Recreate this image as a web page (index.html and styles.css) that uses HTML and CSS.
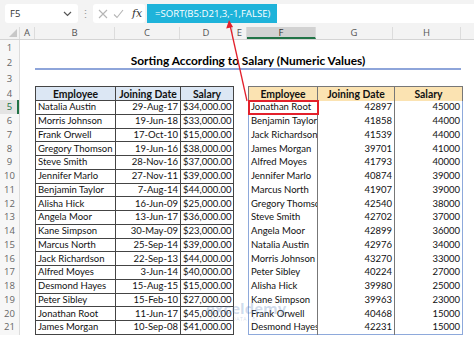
FILE: index.html
```html
<!DOCTYPE html>
<html>
<head>
<meta charset="utf-8">
<link rel="stylesheet" href="styles.css">
</head>
<body>
<div class="app">
  <div class="fbar">
    <div class="namebox"><span>F5</span>
      <svg class="chev" width="9" height="6" viewBox="0 0 9 6"><path d="M1 1 L4.5 4.5 L8 1" fill="none" stroke="#555" stroke-width="1.2"/></svg>
    </div>
    <div class="dots">⋮</div>
    <div class="fbtns">
      <svg width="10" height="10" viewBox="0 0 10 10"><path d="M1 1 L9 9 M9 1 L1 9" stroke="#b5b5b5" stroke-width="1.1"/></svg>
      <svg width="11" height="10" viewBox="0 0 11 10"><path d="M1 5.5 L4 8.5 L10 1" fill="none" stroke="#b5b5b5" stroke-width="1.1"/></svg>
      <span class="fx">fx</span>
    </div>
    <div class="finput"><span class="formula">=SORT(B5:D21,3,-1,FALSE)</span></div>
  </div>

  <div class="colhead">
    <div class="corner"><svg width="8" height="8" viewBox="0 0 8 8"><path d="M8 0 L8 8 L0 8 Z" fill="#c8c8c8"/></svg></div>
    <div class="ch w-a">A</div>
    <div class="ch w-b">B</div>
    <div class="ch w-c">C</div>
    <div class="ch w-d">D</div>
    <div class="ch w-e">E</div>
    <div class="ch w-f sel">F</div>
    <div class="ch w-g">G</div>
    <div class="ch w-h">H</div>
    <div class="ch w-i"></div>
  </div>

  <div class="body">
    <div class="rownums">
      <div class="rn r1">1</div>
      <div class="rn r2">2</div>
      <div class="rn r3">3</div>
      <div class="rn r4">4</div>
      <div class="rn rd act">5</div>
      <div class="rn rd">6</div>
      <div class="rn rd">7</div>
      <div class="rn rd">8</div>
      <div class="rn rd">9</div>
      <div class="rn rd">10</div>
      <div class="rn rd">11</div>
      <div class="rn rd">12</div>
      <div class="rn rd">13</div>
      <div class="rn rd">14</div>
      <div class="rn rd">15</div>
      <div class="rn rd">16</div>
      <div class="rn rd">17</div>
      <div class="rn rd">18</div>
      <div class="rn rd">19</div>
      <div class="rn rd">20</div>
      <div class="rn rd">21</div>
    </div>
    <div class="content">
      <div class="row1"></div>
      <div class="row2"><div class="title">Sorting According to Salary (Numeric Values)</div></div>
      <div class="row3"></div>
      <div class="tables">
        <table class="lt">
          <colgroup><col class="cb"><col class="cc"><col class="cd"></colgroup>
          <tr class="hd"><th>Employee</th><th>Joining Date</th><th>Salary</th></tr>
          <tr><td>Natalia Austin</td><td class="r">29-Aug-17</td><td><div class="acc"><span>$</span><span>34,000.00</span></div></td></tr>
          <tr><td>Morris Johnson</td><td class="r">19-Jun-18</td><td><div class="acc"><span>$</span><span>33,000.00</span></div></td></tr>
          <tr><td>Frank Orwell</td><td class="r">17-Oct-10</td><td><div class="acc"><span>$</span><span>15,000.00</span></div></td></tr>
          <tr><td>Gregory Thomson</td><td class="r">19-Jun-16</td><td><div class="acc"><span>$</span><span>38,000.00</span></div></td></tr>
          <tr><td>Steve Smith</td><td class="r">28-Nov-16</td><td><div class="acc"><span>$</span><span>37,000.00</span></div></td></tr>
          <tr><td>Jennifer Marlo</td><td class="r">27-Nov-11</td><td><div class="acc"><span>$</span><span>39,000.00</span></div></td></tr>
          <tr><td>Benjamin Taylor</td><td class="r">7-Aug-14</td><td><div class="acc"><span>$</span><span>44,000.00</span></div></td></tr>
          <tr><td>Alisha Hick</td><td class="r">16-Jun-09</td><td><div class="acc"><span>$</span><span>25,000.00</span></div></td></tr>
          <tr><td>Angela Moor</td><td class="r">13-Jun-17</td><td><div class="acc"><span>$</span><span>36,000.00</span></div></td></tr>
          <tr><td>Kane Simpson</td><td class="r">30-May-09</td><td><div class="acc"><span>$</span><span>23,000.00</span></div></td></tr>
          <tr><td>Marcus North</td><td class="r">25-Sep-14</td><td><div class="acc"><span>$</span><span>39,000.00</span></div></td></tr>
          <tr><td>Jack Richardson</td><td class="r">22-Sep-13</td><td><div class="acc"><span>$</span><span>44,000.00</span></div></td></tr>
          <tr><td>Alfred Moyes</td><td class="r">3-Jun-14</td><td><div class="acc"><span>$</span><span>40,000.00</span></div></td></tr>
          <tr><td>Desmond Hayes</td><td class="r">15-Aug-15</td><td><div class="acc"><span>$</span><span>15,000.00</span></div></td></tr>
          <tr><td>Peter Sibley</td><td class="r">15-Feb-10</td><td><div class="acc"><span>$</span><span>27,000.00</span></div></td></tr>
          <tr><td>Jonathan Root</td><td class="r">11-Jun-17</td><td><div class="acc"><span>$</span><span>45,000.00</span></div></td></tr>
          <tr><td>James Morgan</td><td class="r">10-Sep-08</td><td><div class="acc"><span>$</span><span>41,000.00</span></div></td></tr>
        </table>
        <table class="rt">
          <colgroup><col class="cf"><col class="cg"><col class="chh"></colgroup>
          <tr class="hd"><th>Employee</th><th>Joining Date</th><th>Salary</th></tr>
          <tr><td class="active">Jonathan Root</td><td class="r">42897</td><td class="r">45000</td></tr>
          <tr><td>Benjamin Taylor</td><td class="r">41858</td><td class="r">44000</td></tr>
          <tr><td>Jack Richardson</td><td class="r">41539</td><td class="r">44000</td></tr>
          <tr><td>James Morgan</td><td class="r">39701</td><td class="r">41000</td></tr>
          <tr><td>Alfred Moyes</td><td class="r">41793</td><td class="r">40000</td></tr>
          <tr><td>Jennifer Marlo</td><td class="r">40874</td><td class="r">39000</td></tr>
          <tr><td>Marcus North</td><td class="r">41907</td><td class="r">39000</td></tr>
          <tr><td>Gregory Thomson</td><td class="r">42540</td><td class="r">38000</td></tr>
          <tr><td>Steve Smith</td><td class="r">42702</td><td class="r">37000</td></tr>
          <tr><td>Angela Moor</td><td class="r">42899</td><td class="r">36000</td></tr>
          <tr><td>Natalia Austin</td><td class="r">42976</td><td class="r">34000</td></tr>
          <tr><td>Morris Johnson</td><td class="r">43270</td><td class="r">33000</td></tr>
          <tr><td>Peter Sibley</td><td class="r">40224</td><td class="r">27000</td></tr>
          <tr><td>Alisha Hick</td><td class="r">39980</td><td class="r">25000</td></tr>
          <tr><td>Kane Simpson</td><td class="r">39963</td><td class="r">23000</td></tr>
          <tr><td>Frank Orwell</td><td class="r">40468</td><td class="r">15000</td></tr>
          <tr><td>Desmond Hayes</td><td class="r">42231</td><td class="r">15000</td></tr>
        </table>
      </div>
    </div>
  </div>

  <div class="watermark">
    <div class="wm-main">exceldemy</div>
    <div class="wm-sub">EXCEL · DATA · BI</div>
  </div>

  <svg class="arrow" width="474" height="338" viewBox="0 0 474 338">
    <line x1="247" y1="101" x2="230" y2="25" stroke="#e3202b" stroke-width="1.3"/>
    <path d="M229 20 L226.2 28.5 L233 27 Z" fill="#e3202b"/>
  </svg>
</div>
</body>
</html>
```

FILE: styles.css
```css
* { box-sizing: border-box; }
html, body { margin: 0; padding: 0; }
body {
  width: 474px;
  height: 338px;
  overflow: hidden;
  background: #ffffff;
  font-family: "Lato", "Liberation Sans", sans-serif;
}
.app { position: relative; width: 474px; height: 338px; }

/* formula bar */
.fbar {
  height: 27px;
  background: #f3f3f3;
  display: flex;
  align-items: center;
  padding-left: 5px;
}
.namebox {
  width: 73px;
  height: 19px;
  background: #fff;
  border-radius: 3px;
  display: flex;
  align-items: center;
  justify-content: space-between;
  padding: 0 6px 0 5px;
  font-family: "Open Sans", sans-serif;
  font-size: 9.5px;
  color: #333;
}
.dots {
  width: 15px;
  text-align: center;
  color: #9a9a9a;
  font-size: 11px;
  line-height: 19px;
}
.fbtns {
  width: 52px;
  height: 19px;
  background: #fff;
  border-radius: 3px;
  display: flex;
  align-items: center;
  gap: 5px;
  padding-left: 5px;
}
.fx {
  font-family: "DejaVu Serif", "Liberation Serif", serif;
  font-style: italic;
  font-size: 11px;
  color: #333;
  margin-left: 3px;
}
.finput {
  flex: 1;
  height: 19px;
  margin-left: 2px;
  background: #fff;
  display: flex;
}
.formula {
  width: 130px;
  height: 19px;
  background: #1eb3da;
  color: #ffffff;
  font-family: "Open Sans", sans-serif;
  font-size: 9.6px;
  line-height: 19px;
  padding-left: 8px;
  white-space: nowrap;
}

/* column headers */
.colhead {
  height: 13px;
  display: flex;
  background: #f3f3f3;
  border-bottom: 1px solid #d4d4d4;
  font-family: "Open Sans", sans-serif;
  font-size: 9.5px;
  color: #555;
}
.corner {
  width: 20px;
  display: flex;
  align-items: flex-end;
  justify-content: flex-end;
  padding: 0 2px 2px 0;
  border-right: 1px solid #dcdcdc;
}
.ch {
  text-align: center;
  line-height: 12px;
  border-right: 1px solid #dcdcdc;
}
.ch.sel {
  background: #d2d2d2;
  border-bottom: 2px solid #217346;
  color: #333;
}
.w-a { width: 15px; }
.w-b { width: 80px; }
.w-c { width: 65px; }
.w-d { width: 53px; }
.w-e { width: 14px; }
.w-f { width: 69px; }
.w-g { width: 77px; }
.w-h { width: 68px; }
.w-i { flex: 1; border-right: none; }

/* body */
.body { display: flex; }
.rownums {
  width: 20px;
  background: #f7f7f7;
  border-right: 1px solid #dcdcdc;
  font-family: "Open Sans", sans-serif;
  font-size: 9.5px;
  color: #666;
}
.rn { display: flex; align-items: center; justify-content: center; }
.r1 { height: 14px; }
.r2 { height: 16px; }
.r3 { height: 16px; }
.r4 { height: 14px; }
.rd { height: 13.75px; }
.rn.act { color: #217346; background: #e4e4e4; box-shadow: inset -2px 0 0 #217346; }

.content { flex: 1; }
.row1 { height: 14px; }
.row2 { height: 16px; padding-left: 15px; }
.row3 { height: 16px; }
.title {
  width: 426px;
  height: 16px;
  text-align: center;
  font-weight: 700;
  font-size: 11.9px;
  line-height: 14px;
  color: #000;
  border-bottom: 2px solid #8ea5da;
}

.tables {
  display: flex;
  padding-left: 15px;
  gap: 14px;
  align-items: flex-start;
}
table {
  border-collapse: collapse;
  table-layout: fixed;
  font-size: 9.5px;
  color: #111;
}
tr { height: 13.75px; }
tr.hd { height: 14px; }
th, td {
  padding: 0 2px;
  line-height: 12px;
  white-space: nowrap;
  overflow: hidden;
  text-overflow: clip;
  text-align: left;
}
th { text-align: center; font-weight: 700; font-size: 10.4px; }
td.r { text-align: right; }

.lt { width: 198px; }
.lt col.cb { width: 80px; }
.lt col.cc { width: 65px; }
.lt col.cd { width: 53px; }
.lt th, .lt td { border: 1px solid #444; }
.lt tr.hd th { background: #dce7f4; }
.acc { display: flex; justify-content: space-between; }

.rt { width: 214px; border: 1px solid #8ea9db; }
.rt col.cf { width: 69px; }
.rt col.cg { width: 77px; }
.rt col.chh { width: 68px; }
.rt th { background: #fbe3b2; border: 1px solid #777; border-bottom: none; }
.rt td { border-left: 1px solid #777; border-right: 1px solid #777; }
.rt td:first-child { border-left: 1px solid #8ea9db; }
.rt td:last-child { border-right: 1px solid #8ea9db; }
.rt td.active { outline: 2px solid #e3202b; outline-offset: -1px; }

/* overlays */
.watermark {
  position: absolute;
  left: 206px;
  top: 300px;
  color: rgba(90, 130, 190, 0.28);
  font-family: "Open Sans", sans-serif;
  pointer-events: none;
}
.wm-main { font-size: 15px; font-weight: 700; line-height: 16px; }
.wm-sub { font-size: 5px; letter-spacing: 0.5px; padding-left: 4px; }
.arrow { position: absolute; left: 0; top: 0; pointer-events: none; }
```
